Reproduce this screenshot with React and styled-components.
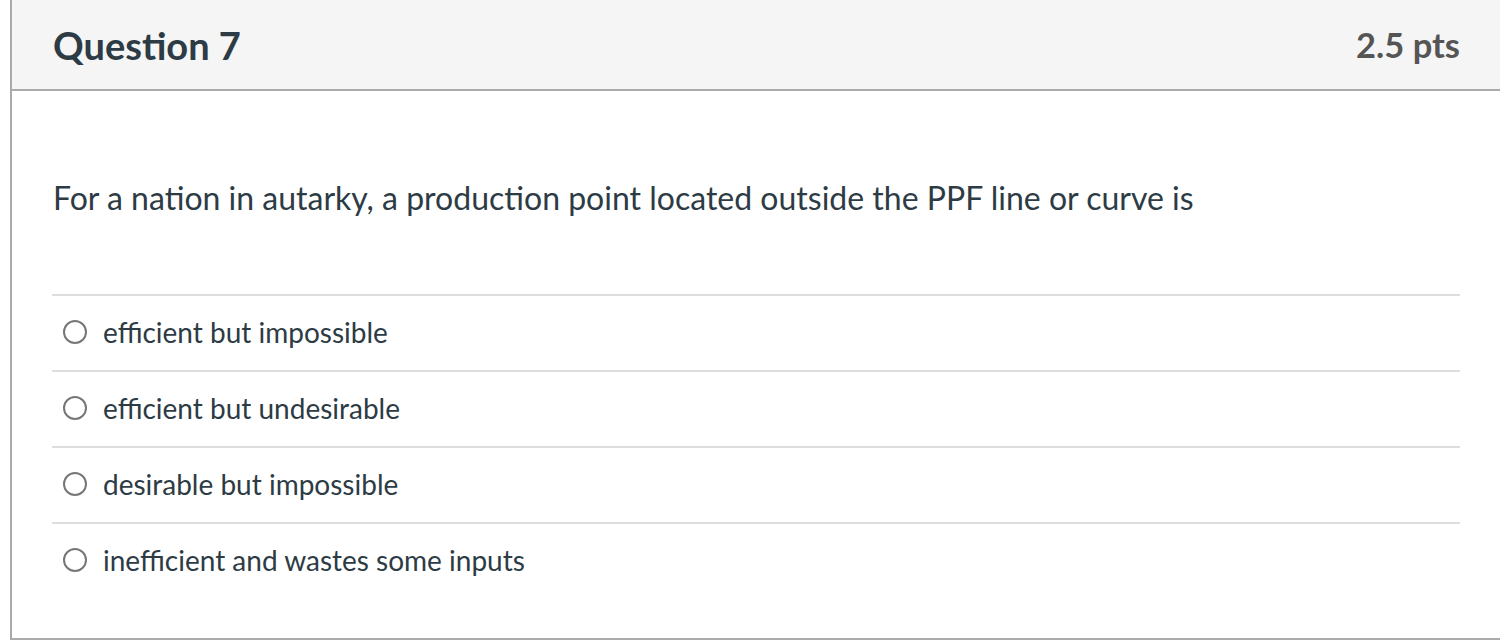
import styled, { createGlobalStyle } from 'styled-components';

const GlobalStyle = createGlobalStyle`
  html, body {
    margin: 0;
    padding: 0;
    background: #fff;
    overflow: hidden;
  }
  body {
    font-family: Lato, "Open Sans", "Liberation Sans", sans-serif;
    color: #2d3b45;
  }
`;

const answers = [
  'efficient but impossible',
  'efficient but undesirable',
  'desirable but impossible',
  'inefficient and wastes some inputs',
];

const App = () => (
  <>
    <GlobalStyle />
    <StyledQuestion>
      <StyledHeader>
        <StyledTitle>Question 7</StyledTitle>
        <StyledPoints>2.5 pts</StyledPoints>
      </StyledHeader>
      <StyledBody>
        <StyledText>
          For a nation in autarky, a production point located outside the PPF
          line or curve is
        </StyledText>
        <StyledAnswers>
          {answers.map((answer) => (
            <StyledAnswer key={answer}>
              <StyledRadio type="radio" name="q7" />
              <span>{answer}</span>
            </StyledAnswer>
          ))}
        </StyledAnswers>
      </StyledBody>
    </StyledQuestion>
  </>
);

const StyledQuestion = styled.div`
  box-sizing: border-box;
  margin: -2px -2px 0 10px;
  height: 642px;
  border: 2px solid #aaaaaa;
  background: #fff;
`;
const StyledHeader = styled.div`
  box-sizing: border-box;
  height: 91px;
  padding: 0 40px 0 41px;
  display: flex;
  align-items: center;
  justify-content: space-between;
  background: #f5f5f5;
  border-bottom: 2px solid #aaaaaa;
`;
const StyledTitle = styled.h2`
  margin: 0;
  font-size: 38px;
  font-weight: 700;
  color: #2d3b45;
`;
const StyledPoints = styled.div`
  font-size: 34.5px;
  font-weight: 700;
  color: #555555;
`;
const StyledBody = styled.div`
  padding: 0 40px;
`;
const StyledText = styled.p`
  margin: 0;
  padding: 87px 0 0 1px;
  height: 116px;
  font-size: 32px;
  line-height: 40px;
`;
const StyledAnswers = styled.div`
  display: flex;
  flex-direction: column;
`;
const StyledAnswer = styled.label`
  box-sizing: border-box;
  height: 76px;
  display: flex;
  align-items: center;
  gap: 16px;
  padding: 0 0 3px 11px;
  border-top: 2px solid #dddddd;
  font-size: 28px;
  color: #2d3b45;
`;
const StyledRadio = styled.input`
  appearance: none;
  margin: 0;
  width: 24px;
  height: 24px;
  border: 2px solid #777777;
  border-radius: 50%;
  background: #fff;
`;

export default App;
